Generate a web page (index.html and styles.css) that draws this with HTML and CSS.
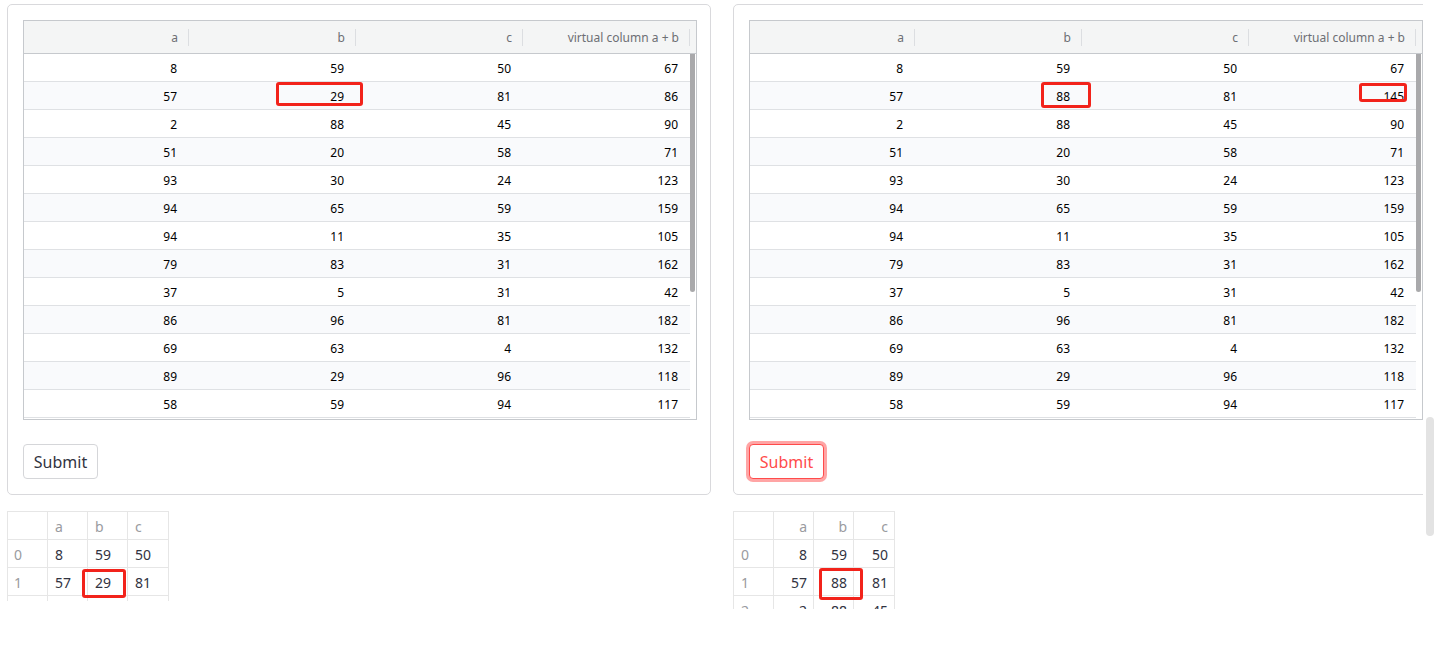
FILE: index.html
```html
<!DOCTYPE html>
<html>
<head>
<meta charset="utf-8">
<link rel="stylesheet" href="styles.css">
</head>
<body>
<div class="viewport">
  <div class="columns">
    <section class="col">
      <div class="panel">
        <div class="grid">
          <div class="grid-head">
            <div class="hc"><span>a</span></div>
            <div class="hc"><span>b</span></div>
            <div class="hc"><span>c</span></div>
            <div class="hc"><span>virtual column a + b</span></div>
          </div>
          <div class="grid-body">
            <div class="rows">
              <div class="row"><span>8</span><span>59</span><span>50</span><span>67</span></div>
              <div class="row"><span>57</span><span>29</span><span>81</span><span>86</span></div>
              <div class="row"><span>2</span><span>88</span><span>45</span><span>90</span></div>
              <div class="row"><span>51</span><span>20</span><span>58</span><span>71</span></div>
              <div class="row"><span>93</span><span>30</span><span>24</span><span>123</span></div>
              <div class="row"><span>94</span><span>65</span><span>59</span><span>159</span></div>
              <div class="row"><span>94</span><span>11</span><span>35</span><span>105</span></div>
              <div class="row"><span>79</span><span>83</span><span>31</span><span>162</span></div>
              <div class="row"><span>37</span><span>5</span><span>31</span><span>42</span></div>
              <div class="row"><span>86</span><span>96</span><span>81</span><span>182</span></div>
              <div class="row"><span>69</span><span>63</span><span>4</span><span>132</span></div>
              <div class="row"><span>89</span><span>29</span><span>96</span><span>118</span></div>
              <div class="row"><span>58</span><span>59</span><span>94</span><span>117</span></div>
            </div>
            <div class="vscroll"><div class="thumb"></div></div>
          </div>
        </div>
        <button class="btn">Submit</button>
      </div>
      <div class="df-clip df-clip-left">
        <div class="df df-left">
          <div class="c h"></div><div class="c h">a</div><div class="c h">b</div><div class="c h">c</div>
          <div class="c i">0</div><div class="c">8</div><div class="c">59</div><div class="c">50</div>
          <div class="c i">1</div><div class="c">57</div><div class="c">29</div><div class="c">81</div>
          <div class="c i"></div><div class="c"></div><div class="c"></div><div class="c"></div>
        </div>
      </div>
    </section>
    <section class="col">
      <div class="panel">
        <div class="grid">
          <div class="grid-head">
            <div class="hc"><span>a</span></div>
            <div class="hc"><span>b</span></div>
            <div class="hc"><span>c</span></div>
            <div class="hc"><span>virtual column a + b</span></div>
          </div>
          <div class="grid-body">
            <div class="rows">
              <div class="row"><span>8</span><span>59</span><span>50</span><span>67</span></div>
              <div class="row"><span>57</span><span>88</span><span>81</span><span>145</span></div>
              <div class="row"><span>2</span><span>88</span><span>45</span><span>90</span></div>
              <div class="row"><span>51</span><span>20</span><span>58</span><span>71</span></div>
              <div class="row"><span>93</span><span>30</span><span>24</span><span>123</span></div>
              <div class="row"><span>94</span><span>65</span><span>59</span><span>159</span></div>
              <div class="row"><span>94</span><span>11</span><span>35</span><span>105</span></div>
              <div class="row"><span>79</span><span>83</span><span>31</span><span>162</span></div>
              <div class="row"><span>37</span><span>5</span><span>31</span><span>42</span></div>
              <div class="row"><span>86</span><span>96</span><span>81</span><span>182</span></div>
              <div class="row"><span>69</span><span>63</span><span>4</span><span>132</span></div>
              <div class="row"><span>89</span><span>29</span><span>96</span><span>118</span></div>
              <div class="row"><span>58</span><span>59</span><span>94</span><span>117</span></div>
            </div>
            <div class="vscroll"><div class="thumb"></div></div>
          </div>
        </div>
        <button class="btn btn-focus">Submit</button>
      </div>
      <div class="df-clip df-clip-right">
        <div class="df df-right">
          <div class="c h"></div><div class="c h">a</div><div class="c h">b</div><div class="c h">c</div>
          <div class="c i">0</div><div class="c">8</div><div class="c">59</div><div class="c">50</div>
          <div class="c i">1</div><div class="c">57</div><div class="c">88</div><div class="c">81</div>
          <div class="c i">2</div><div class="c">2</div><div class="c">88</div><div class="c">45</div>
        </div>
      </div>
    </section>
  </div>
  <div class="mark m1"></div>
  <div class="mark m2"></div>
  <div class="mark m3"></div>
  <div class="mark m4"></div>
  <div class="mark m5"></div>
</div>
<div class="page-scroll"></div>
</body>
</html>
```
FILE: styles.css
```css
html, body {
  margin: 0;
  padding: 0;
  background: #ffffff;
}
body {
  width: 1436px;
  height: 647px;
  overflow: hidden;
  position: relative;
  font-family: "Noto Sans", "Open Sans", sans-serif;
}
.viewport {
  position: relative;
  width: 1423px;
  height: 647px;
  overflow: hidden;
}
.columns {
  display: flex;
  gap: 22px;
  padding: 4px 0 0 7px;
  width: 1500px;
}
.col {
  width: 704px;
  flex: none;
  display: flex;
  flex-direction: column;
  gap: 16px;
}
.panel {
  box-sizing: border-box;
  width: 704px;
  height: 491px;
  border: 1px solid #d9d9dc;
  border-radius: 5px;
  padding: 15px 13px 15px 15px;
  display: flex;
  flex-direction: column;
  align-items: flex-start;
  gap: 24px;
}
.grid {
  box-sizing: border-box;
  width: 674px;
  height: 400px;
  border: 1px solid #c6c9cd;
  display: flex;
  flex-direction: column;
  font-family: "Noto Sans", sans-serif;
  font-size: 12px;
  flex: none;
}
.grid-head {
  height: 32px;
  border-bottom: 1px solid #c6c9cd;
  background: #f4f5f5;
  display: flex;
  flex: none;
}
.hc {
  width: 167px;
  display: flex;
  align-items: center;
  justify-content: flex-end;
  color: #6d6f74;
}
.hc:first-child {
  width: 165px;
}
.hc span {
  padding-right: 10px;
}
.hc::after {
  content: "";
  width: 1px;
  height: 17px;
  background: #dcdee1;
}
.grid-body {
  flex: 1;
  display: flex;
  overflow: hidden;
}
.rows {
  width: 666px;
  flex: none;
}
.row {
  box-sizing: border-box;
  height: 28px;
  padding-top: 2px;
  border-bottom: 1px solid #dfe1e4;
  display: flex;
  align-items: center;
  color: #000000;
}
.row:nth-child(even) {
  background: #f9fafc;
}
.row span {
  box-sizing: border-box;
  width: 167px;
  text-align: right;
  padding-right: 12px;
}
.row span:first-child {
  width: 165px;
}
.vscroll {
  width: 6px;
  flex: none;
}
.thumb {
  width: 5px;
  height: 238px;
  background: #a9a9ab;
  border-radius: 0 0 3px 3px;
}
.btn {
  box-sizing: border-box;
  height: 35px;
  width: 75px;
  padding: 0;
  background: #ffffff;
  border: 1px solid #d5d6d9;
  border-radius: 4px;
  font-family: "Noto Sans", sans-serif;
  font-size: 16px;
  color: #31333f;
  flex: none;
}
.btn-focus {
  border-color: #ff4b4b;
  color: #ff4b4b;
  box-shadow: 0 0 0 3px rgba(255, 75, 75, 0.5);
}
.df-clip {
  overflow: hidden;
}
.df-clip-left {
  height: 90px;
}
.df-clip-right {
  height: 98px;
}
.df {
  display: grid;
  grid-template-columns: 40px 40px 40px 41px;
  grid-auto-rows: 28px;
  width: 161px;
  border-top: 1px solid #e6e6e6;
  border-left: 1px solid #e6e6e6;
  font-family: "Noto Sans", sans-serif;
  font-size: 14px;
  color: #31333f;
}
.c {
  box-sizing: border-box;
  border-right: 1px solid #e6e6e6;
  border-bottom: 1px solid #e6e6e6;
  display: flex;
  align-items: center;
  padding: 2px 6px 0 7px;
  line-height: 1;
}
.c.h, .c.i {
  color: #9a9ba0;
}
.df-left .c.i {
  padding-left: 6px;
}
.df-right .c {
  justify-content: flex-end;
}
.df-right .c.i {
  justify-content: flex-start;
}
.mark {
  position: absolute;
  box-sizing: border-box;
  border: 3px solid #f2231b;
  border-radius: 3px;
}
.m1 { left: 276px; top: 82px; width: 87px; height: 24px; }
.m2 { left: 1041px; top: 82px; width: 50px; height: 26px; }
.m3 { left: 1359px; top: 83px; width: 48px; height: 19px; }
.m4 { left: 82px; top: 569px; width: 44px; height: 29px; }
.m5 { left: 819px; top: 568px; width: 44px; height: 32px; }
.page-scroll {
  position: absolute;
  left: 1426px;
  top: 417px;
  width: 8px;
  height: 119px;
  background: #e3e3e3;
  border-radius: 4px;
}
```
